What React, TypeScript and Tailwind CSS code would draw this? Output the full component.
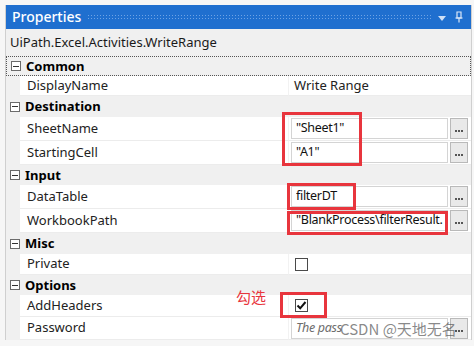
import React from "react";

const FONT = { fontFamily: '"Noto Sans", "Noto Sans CJK SC", sans-serif' };

function Minus() {
  return (
    <div className="w-[10px] h-[10px] border border-[#6b6b6b] bg-white flex items-center justify-center ml-[3px] mr-[5px]">
      <div className="w-[6px] h-px bg-[#333]" />
    </div>
  );
}

function Category({ name, h = "h-[20px]" }: { name: string; h?: string }) {
  return (
    <div className={`${h} flex items-center bg-[#f0f0f0] pl-[1px]`}>
      <Minus />
      <span className="text-[13px] font-bold text-black leading-none">{name}</span>
    </div>
  );
}

function Prop({ label, h, children }: { label: string; h: string; children?: React.ReactNode }) {
  return (
    <div className={`${h} flex bg-[#f0f0f0]`}>
      <div className="w-[14px] shrink-0" />
      <div className="flex-1 flex items-center bg-white border-b border-[#ececec] pl-[7px] text-[13px] text-[#222]">
        {label}
      </div>
      <div className="w-[183px] shrink-0 flex items-center bg-white border-b border-[#ececec] border-l border-l-[#f2f2f2]">
        {children}
      </div>
    </div>
  );
}

function Box({ text, italic }: { text: string; italic?: boolean }) {
  return (
    <div className="flex items-center w-full pl-[2px] pr-[3px] gap-[2px]">
      <div className="flex-1 min-w-0 h-[21px] border border-[#d4d4d4] bg-white flex items-center pl-[4px] overflow-hidden">
        <span
          className={`block w-full overflow-hidden whitespace-nowrap text-[12.5px] tracking-[-0.3px] ${
            italic ? "italic text-[#6d6d6d]" : "text-[#111]"
          }`}
        >
          {text}
        </span>
      </div>
      <div className="w-[18px] h-[21px] shrink-0 border border-[#b9b9b9] bg-[#e9e9e9] flex items-end justify-center gap-[1px] pb-[6px]">
        <div className="w-[2px] h-[2px] bg-[#555]" />
        <div className="w-[2px] h-[2px] bg-[#555]" />
        <div className="w-[2px] h-[2px] bg-[#555]" />
      </div>
    </div>
  );
}

function Check({ checked }: { checked?: boolean }) {
  return (
    <div className="ml-[6px] w-[13px] h-[13px] border border-[#4a4a4a] bg-white flex items-center justify-center">
      {checked && (
        <svg width="11" height="11" viewBox="0 0 11 11">
          <path d="M1.5 5.5 L4.2 8.3 L9.5 2" stroke="#111" strokeWidth="2" fill="none" />
        </svg>
      )}
    </div>
  );
}

export default function App() {
  return (
    <div className="w-[474px] h-[346px] bg-[#f6f6f6] relative overflow-hidden" style={FONT}>
      <div className="pt-[5px] pl-[5px] pr-[2px]">
        <div className="border-l border-r border-[#cfcfcf] bg-[#f0f0f0]">
          {/* title bar */}
          <div className="h-[24px] bg-[#1f6fcf] flex items-center pl-[6px] pr-[8px]">
            <span className="text-[14px] font-medium text-white leading-none">Properties</span>
            <div className="flex-1 h-[7px] mx-[6px] bg-[radial-gradient(#6ea3e4_0.8px,transparent_0.9px)] bg-[length:3px_3px]" />
            <svg width="8" height="6" viewBox="0 0 8 6" className="mr-[9px] mt-[3px]">
              <path d="M0 0 H8 L4 5 Z" fill="#cfe0f6" />
            </svg>
            <svg width="8" height="12" viewBox="0 0 8 12">
              <path d="M2 1 H6 V7 H2 Z" fill="none" stroke="#dbe7f7" strokeWidth="1.2" />
              <path d="M0.5 7 H7.5" stroke="#dbe7f7" strokeWidth="1.2" />
              <path d="M4 7 V11.5" stroke="#dbe7f7" strokeWidth="1.2" />
            </svg>
          </div>
          {/* description */}
          <div className="h-[27px] flex items-center pl-[4px] text-[13px] text-[#1a1a1a]">
            UiPath.Excel.Activities.WriteRange
          </div>
          <div className="border border-dotted border-[#555]">
            <Category name="Common" h="h-[18px]" />
          </div>
          <Prop label="DisplayName" h="h-[20px]">
            <span className="pl-[5px] text-[13px] text-[#222]">Write Range</span>
          </Prop>
          <Category name="Destination" h="h-[21px]" />
          <Prop label="SheetName" h="h-[24px]">
            <Box text={'"Sheet1"'} />
          </Prop>
          <Prop label="StartingCell" h="h-[24px]">
            <Box text={'"A1"'} />
          </Prop>
          <Category name="Input" />
          <Prop label="DataTable" h="h-[24px]">
            <Box text="filterDT" />
          </Prop>
          <Prop label="WorkbookPath" h="h-[24px]">
            <Box text={'"BlankProcess\\filterResult.'} />
          </Prop>
          <Category name="Misc" h="h-[21px]" />
          <Prop label="Private" h="h-[21px]">
            <Check />
          </Prop>
          <Category name="Options" />
          <Prop label="AddHeaders" h="h-[22px]">
            <Check checked />
          </Prop>
          <Prop label="Password" h="h-[23px]">
            <Box text="The pass" italic />
          </Prop>
        </div>
      </div>

      {/* annotations */}
      <div className="absolute left-[282px] top-[112px] w-[80px] h-[54px] border-[3px] border-[#e8353d]" />
      <div className="absolute left-[287px] top-[183px] w-[69px] h-[27px] border-[3px] border-[#e8353d]" />
      <div className="absolute left-[287px] top-[211px] w-[161px] h-[24px] border-[3px] border-[#e8353d]" />
      <div className="absolute left-[280px] top-[292px] w-[47px] h-[26px] border-[3px] border-[#e8353d]" />
      <div className="absolute left-[236px] top-[289px] text-[15px] leading-none text-[#e8353d]" style={{ fontFamily: '"Noto Sans CJK SC", sans-serif' }}>
        勾选
      </div>
      <div className="absolute left-[340px] top-[321px] text-[15px] leading-none text-[#555]/70" style={{ fontFamily: '"Noto Sans CJK SC", sans-serif' }}>
        CSDN @天地无名
      </div>
    </div>
  );
}
